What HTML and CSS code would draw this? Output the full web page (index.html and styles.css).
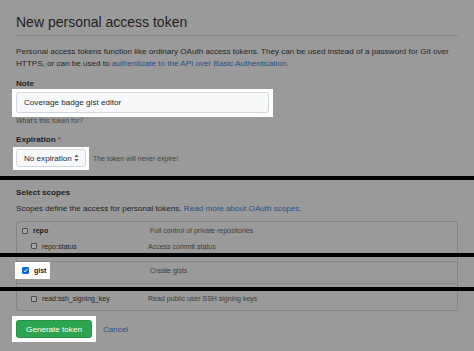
FILE: index.html
```html
<!DOCTYPE html>
<html lang="en">
<head>
<meta charset="utf-8">
<title>New personal access token</title>
<link rel="stylesheet" href="styles.css">
</head>
<body>
<section class="strip strip-top">
  <h1 class="subhead">New personal access token</h1>
  <p class="intro">Personal access tokens function like ordinary OAuth access tokens. They can be used instead of a password for Git over<br>HTTPS, or can be used to <a href="#">authenticate to the API over Basic Authentication</a>.</p>
  <div class="field-label note-label">Note</div>
  <div class="spot spot-input"><div class="text-input">Coverage badge gist editor</div></div>
  <div class="hint">What’s this token for?</div>
  <div class="field-label exp-label">Expiration <span class="req">*</span></div>
  <div class="exp-row">
    <div class="spot spot-select">
      <div class="select"><span>No expiration</span>
        <svg class="caret" width="5" height="8" viewBox="0 0 5 8"><path d="M2.5 0.5 L4.6 3 L0.4 3 Z M2.5 7.5 L4.6 5 L0.4 5 Z" fill="#57606a"/></svg>
      </div>
    </div>
    <span class="exp-note">The token will never expire!</span>
  </div>
</section>
<div class="cut"></div>
<section class="strip strip-scopes">
  <div class="field-label scopes-label">Select scopes</div>
  <p class="scopes-desc">Scopes define the access for personal tokens. <a href="#">Read more about OAuth scopes.</a></p>
  <div class="scope-box box-top">
    <div class="scope-row top-row">
      <div class="scope-name"><span class="cb"></span><b>repo</b></div>
      <div class="scope-desc">Full control of private repositories</div>
    </div>
    <div class="scope-row sub-row status-row">
      <div class="scope-name"><span class="cb"></span><span>repo:status</span></div>
      <div class="scope-desc">Access commit status</div>
    </div>
  </div>
</section>
<div class="cut"></div>
<section class="strip strip-gist">
  <div class="scope-box box-mid">
    <div class="scope-group">
      <div class="scope-row gist-row">
        <div class="scope-name">
          <span class="spot spot-check">
            <span class="cb checked"><svg width="5" height="5" viewBox="0 0 10 10"><path d="M1.5 5.2 L4 7.6 L8.6 2.4" fill="none" stroke="#fff" stroke-width="2"/></svg></span><b>gist</b>
          </span>
        </div>
        <div class="scope-desc">Create gists</div>
      </div>
    </div>
  </div>
</section>
<div class="cut"></div>
<section class="strip strip-bottom">
  <div class="scope-box box-bottom">
    <div class="scope-row sub-row ssh-row">
      <div class="scope-name"><span class="cb"></span><span>read:ssh_signing_key</span></div>
      <div class="scope-desc">Read public user SSH signing keys</div>
    </div>
  </div>
  <div class="actions">
    <div class="spot spot-btn"><button class="btn-primary" type="button">Generate token</button></div>
    <a class="cancel" href="#">Cancel</a>
  </div>
</section>
</body>
</html>
```

FILE: styles.css
```css
* { box-sizing: border-box; }

body {
  margin: 0;
  background: #9a9a9a;
  font-family: "Liberation Sans", Arial, Helvetica, sans-serif;
  font-size: 8.1px;
  color: #242424;
}

a { color: #24508c; text-decoration: none; }

.strip { padding: 0 16px; }
.strip-top { padding-bottom: 6px; }

.subhead {
  margin: 0;
  padding: 12px 0 3px;
  font-size: 14px;
  line-height: 20px;
  font-weight: normal;
  color: #1e1e1e;
  border-bottom: 1px solid #878787;
}

.intro {
  margin: 10px 0 0;
  line-height: 11.5px;
  color: #262626;
}

.field-label {
  font-weight: bold;
  line-height: 10px;
  color: #1c1c1c;
}
.note-label { margin-top: 10px; }
.exp-label { margin-top: 10px; }
.req { color: #8a2226; font-weight: normal; }

.spot { background: #fff; }

.spot-input {
  width: 261px;
  margin-left: -4px;
  padding: 3px 4px 4px;
}
.text-input {
  height: 21px;
  border: 1px solid #d0d7de;
  border-radius: 3px;
  background: #f6f8fa;
  padding: 0 7px;
  line-height: 19px;
  color: #24292f;
}

.hint {
  font-size: 7px;
  line-height: 8px;
  color: #424242;
}

.exp-row {
  display: flex;
  align-items: center;
  margin-top: 2px;
}
.spot-select {
  margin-left: -3px;
  padding: 2px 3px 3px;
}
.select {
  width: 70px;
  height: 18px;
  display: flex;
  align-items: center;
  justify-content: space-between;
  padding: 0 6px 0 7px;
  border: 1px solid #d0d7de;
  border-radius: 3px;
  background: #f6f8fa;
  color: #24292f;
}
.caret { display: block; }
.exp-note {
  margin-left: 4px;
  font-size: 7px;
  color: #424242;
}

.cut { height: 4px; background: #000; }

.scopes-label { margin-top: 8px; }
.scopes-desc {
  margin: 5px 0 0;
  line-height: 12px;
}

.scope-box {
  border: 1px solid #858585;
}
.box-top {
  margin-top: 6px;
  border-bottom: 0;
  border-radius: 3px 3px 0 0;
}
.box-mid {
  border-top: 0;
  border-bottom: 0;
  padding: 4px 0 3px;
}
.box-bottom {
  border-top: 0;
  border-radius: 0 0 3px 3px;
  padding-bottom: 4px;
}

.scope-row {
  display: flex;
  align-items: center;
  font-size: 7px;
  color: #1e1e1e;
}
.scope-name {
  display: flex;
  align-items: center;
  gap: 5px;
  width: 133px;
  padding-left: 5px;
  flex: none;
}
.sub-row .scope-name {
  width: 131px;
  padding-left: 14px;
}
.scope-desc { color: #3c3c3c; }

.top-row { height: 17px; }
.status-row { height: 14px; }
.ssh-row { height: 15px; }

.scope-group {
  border-top: 1px solid #888;
  border-bottom: 1px solid #888;
  padding-bottom: 4px;
}
.gist-row { height: 17px; }
.gist-row .scope-name { padding-left: 0; }
.spot-check {
  display: flex;
  align-items: center;
  gap: 5px;
  height: 17px;
  margin-left: -2px;
  padding: 0 4px 0 7px;
}

.cb {
  display: flex;
  align-items: center;
  justify-content: center;
  width: 6px;
  height: 6px;
  border: 1px solid #4a4a4a;
  border-radius: 1px;
  background: #a6a6a6;
  flex: none;
}
.cb.checked {
  width: 7px;
  height: 7px;
  background: #0969da;
  border-color: #0969da;
}

.actions {
  display: flex;
  align-items: center;
  margin-top: 5px;
}
.spot-btn {
  margin-left: -4px;
  padding: 4px;
}
.btn-primary {
  display: block;
  width: 76px;
  height: 18px;
  padding: 0;
  border: 1px solid rgba(27, 31, 36, 0.15);
  border-radius: 3px;
  background: #2da44e;
  color: #fff;
  font-family: "Liberation Sans", Arial, sans-serif;
  font-size: 8.1px;
}
.cancel { margin-left: 7px; }
```
